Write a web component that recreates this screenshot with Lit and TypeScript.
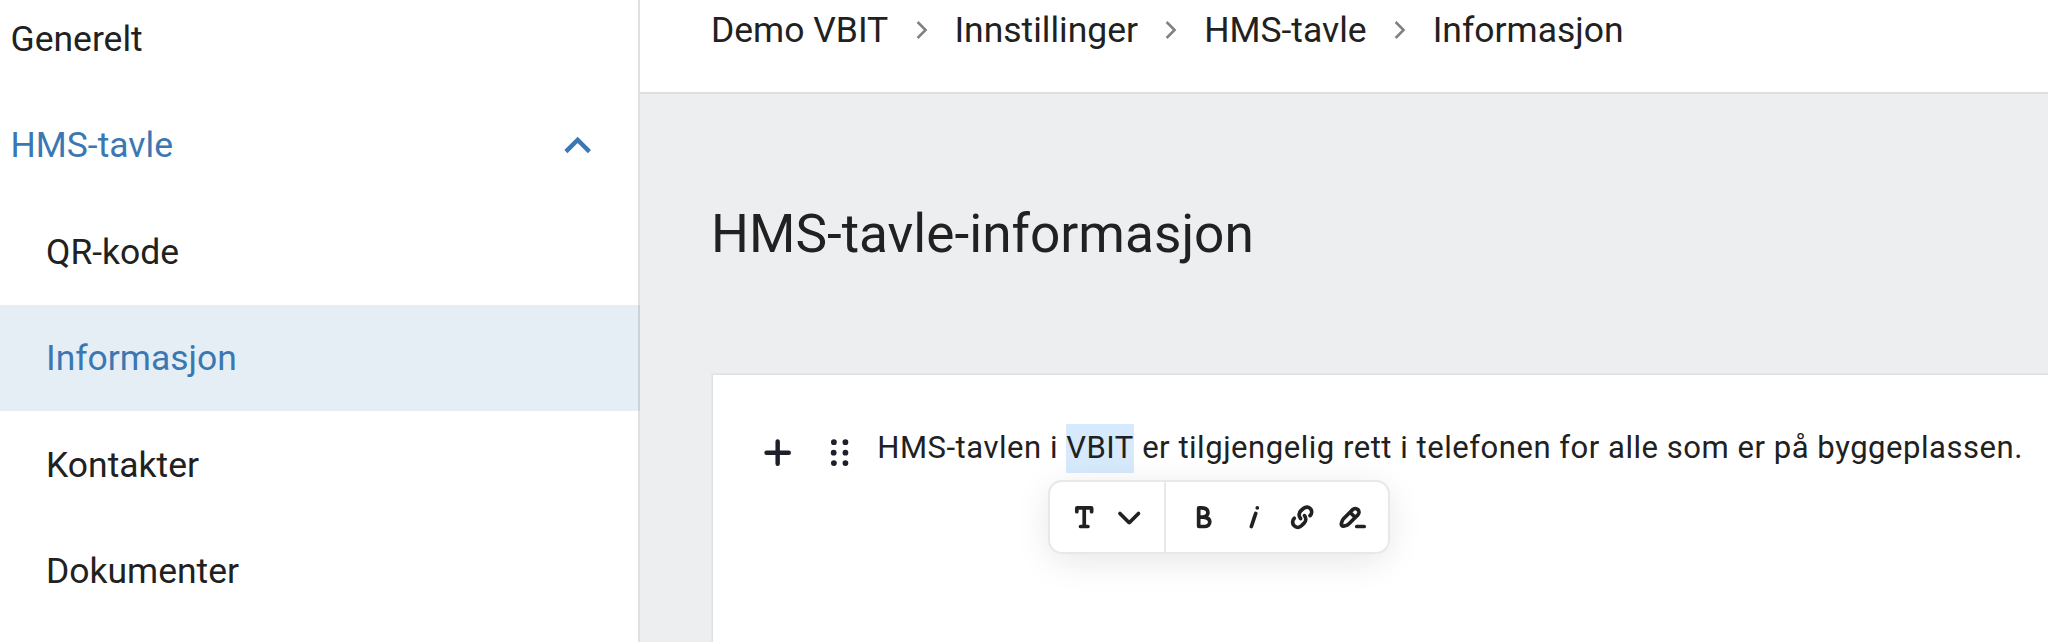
import { LitElement, html, css, svg } from "lit";
import { customElement } from "lit/decorators.js";

const stroked = (cls: string, body: unknown) => html`
  <svg class="icon ${cls}" viewBox="0 0 24 24" fill="none" stroke="currentColor" stroke-width="2" stroke-linecap="round">
    ${body}
  </svg>`;

const plus = svg`<path d="M12 7V12M12 17V12M17 12H12M12 12H7"/>`;
const dots = svg`<path stroke-width="2.6" d="M9.41 7.3H9.4M14.6 7.3H14.59M9.31 12H9.3M14.6 12H14.59M9.41 16.7H9.4M14.6 16.7H14.59"/>`;
const text = svg`<path d="M8 9V7.2C8 7.09 8.09 7 8.2 7L12 7M16 9V7.2C16 7.09 15.91 7 15.8 7L12 7M12 7L12 17M12 17H10M12 17H14"/>`;
const down = svg`<path d="M7 10L11.8586 14.8586C11.9367 14.9367 12.0633 14.9367 12.1414 14.8586L17 10"/>`;
const bold = svg`<path d="M9 12L9 7.1C9 7.04477 9.04477 7 9.1 7H10.4C11.5 7 14 7.1 14 9.5C14 9.5 14 12 11 12M9 12V16.8C9 16.9105 9.08954 17 9.2 17H12.5C14 17 15 16 15 14.5C15 11.7046 11 12 11 12M9 12H11"/>`;
const italic = svg`<path d="M13.34 10C12.4223 12.7337 11 17 11 17M14.21 7H14.2"/>`;
const link = svg`<path d="M7.7 12.6L7.679 12.62C6.54 13.7048 6.52 15.5155 7.635 16.625C8.723 17.7073 10.48 17.7102 11.5712 16.6314L13.0263 15.193C14.0703 14.1609 14.2141 12.525 13.3662 11.3266L13.22 11.12"/><path d="M16.22 11.12L16.3564 10.9805C17.2895 10.0265 17.3478 8.5207 16.4914 7.49733C15.5691 6.39509 13.9269 6.25143 12.8271 7.17675L11.3901 8.38588C10.0935 9.47674 9.95706 11.4241 11.0888 12.6852L11.12 12.72"/>`;
const marker = svg`<path d="M11.3536 9.31802L12.7678 7.90381C13.5488 7.12276 14.8151 7.12276 15.5962 7.90381C16.3772 8.68486 16.3772 9.95119 15.5962 10.7322L14.182 12.1464M11.3536 9.31802L7.96729 12.7043C7.40889 13.2627 7.02827 13.9739 6.8734 14.7482L6.69798 15.6253C6.55804 16.325 7.17496 16.942 7.87468 16.802L8.75176 16.6266C9.52612 16.4717 10.2373 16.0911 10.7957 15.5327L14.182 12.1464M11.3536 9.31802L14.182 12.1464"/><path d="M15 17H19"/>`;

@customElement("side-nav")
export class SideNav extends LitElement {
  static styles = css`
    :host {
      display: block;
      box-sizing: border-box;
      width: 640px;
      height: 642px;
      overflow: hidden;
      background: linear-gradient(#0000001f, #0000001f) right / 2px 100% no-repeat, #fff;
    }
    .list { display: flex; flex-direction: column; margin-top: -14.6px; }
    .row {
      display: flex;
      flex: none;
      align-items: center;
      justify-content: space-between;
      box-sizing: border-box;
      height: 106.5px;
      padding: 0 40px 0 10.5px;
      color: #212121;
    }
    .child { padding-left: 46px; }
    .accent { color: #3b78b3; }
    .active { background: rgba(59, 120, 179, 0.125); }
    .chevron { width: 53.3px; height: 53.3px; margin-right: -4.5px; position: relative; top: 0.6px; fill: currentColor; }
  `;
  render() {
    return html`
      <nav class="list">
        <div class="row">Generelt</div>
        <div class="row accent">
          <span>HMS-tavle</span>
          <svg class="chevron" viewBox="0 0 24 24"><path d="M7.41 15.41 12 10.83l4.59 4.58L18 14l-6-6-6 6z"/></svg>
        </div>
        <div class="row child">QR-kode</div>
        <div class="row child accent active">Informasjon</div>
        <div class="row child">Kontakter</div>
        <div class="row child">Dokumenter</div>
      </nav>`;
  }
}

@customElement("crumb-bar")
export class CrumbBar extends LitElement {
  static styles = css`
    :host {
      display: block;
      box-sizing: border-box;
      height: 94px;
      background: #fff;
      border-bottom: 2px solid #dfdfe0;
    }
    .crumbs { display: flex; align-items: center; height: 60px; padding-left: 71px; white-space: nowrap; }
    .sep { flex: none; width: 12px; height: 20px; margin: 0 26.8px 0 27.3px; fill: none; stroke: #808080; stroke-width: 2.5; }
  `;
  render() {
    const names = ["Demo VBIT", "Innstillinger", "HMS-tavle", "Informasjon"];
    return html`<div class="crumbs">
      ${names.map((n, i) => html`${i ? html`<svg class="sep" viewBox="0 0 12 20"><path d="M1.6 2 9.6 10 1.6 18"/></svg>` : ""}<span>${n}</span>`)}
    </div>`;
  }
}

@customElement("inline-toolbar")
export class InlineToolbar extends LitElement {
  static styles = css`
    :host {
      display: flex;
      box-sizing: border-box;
      width: 342px;
      height: 74px;
      background: #fff;
      border: 2px solid #e8e8ea;
      border-radius: 14px;
      box-shadow: 0 7px 36px -4px rgba(13, 20, 33, 0.13);
      color: #212121;
    }
    .group { display: flex; align-items: center; }
    .convert { padding: 0 13.5px 0 12.6px; border-right: 2px solid #e8e8ea; }
    .marks { gap: 4.45px; padding-left: 15.5px; }
    .icon { flex: none; width: 44.44px; height: 44.44px; }
  `;
  render() {
    return html`
      <div class="group convert">${stroked("", text)}${stroked("", down)}</div>
      <div class="group marks">
        ${stroked("", bold)}${stroked("", italic)}${stroked("", link)}${stroked("", marker)}
      </div>`;
  }
}

@customElement("block-editor")
export class BlockEditor extends LitElement {
  static styles = css`
    :host {
      display: block;
      position: relative;
      box-sizing: border-box;
      height: 268px;
      margin-left: 73px;
      padding: 49px 0 0 37.9px;
      background: #fff;
      box-shadow: 0 0 2px 1px #d6dada;
    }
    .block { display: flex; align-items: flex-start; }
    .icon { flex: none; width: 53.33px; height: 53.33px; margin-top: 2.2px; margin-right: 9px; color: #1d202b; }
    .para {
      margin: 0;
      font-size: 31.06px;
      line-height: 48.7px;
      letter-spacing: 0.517px;
      white-space: nowrap;
      color: #212121;
    }
    .handle { margin-right: 10.7px; }
    .picked { display: inline-block; background: #d7e9fc; }
    .toolbar { position: absolute; left: 334.5px; top: 105.2px; }
  `;
  render() {
    return html`
      <div class="block">
        ${stroked("", plus)}${stroked("handle", dots)}
        <p class="para">HMS-tavlen i <span class="picked">VBIT</span> er tilgjengelig rett i telefonen for alle som er på byggeplassen.</p>
      </div>
      <inline-toolbar class="toolbar"></inline-toolbar>`;
  }
}

@customElement("app-root")
export class AppRoot extends LitElement {
  static styles = css`
    :host {
      display: flex;
      width: 2048px;
      height: 642px;
      overflow: hidden;
      background: #edeef0;
      color: #212121;
      font: 400 35.49px Roboto, "Liberation Sans", sans-serif;
    }
    .side { flex: none; }
    .main { flex: 1; min-width: 0; display: flex; flex-direction: column; }
    .title {
      margin: 0;
      padding: 105px 0 106px 71px;
      font-size: 53.2px;
      line-height: 70px;
      font-weight: 400;
    }
    .main > * { flex: none; }
    block-editor { z-index: 0; }
  `;
  render() {
    return html`
      <side-nav class="side"></side-nav>
      <main class="main">
        <crumb-bar></crumb-bar>
        <h1 class="title">HMS-tavle-informasjon</h1>
        <block-editor></block-editor>
      </main>`;
  }
}
